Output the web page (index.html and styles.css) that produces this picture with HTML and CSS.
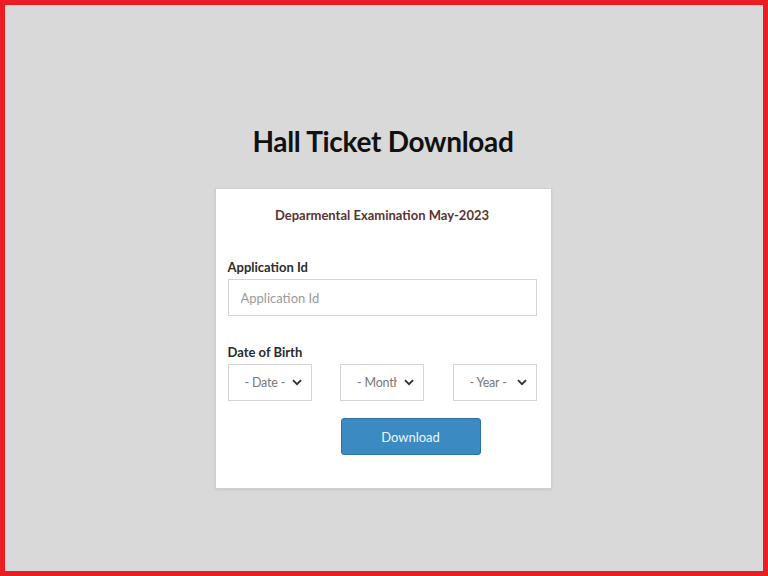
FILE: index.html
```html
<!DOCTYPE html>
<html lang="en">
<head>
<meta charset="utf-8">
<title>Hall Ticket Download</title>
<link rel="stylesheet" href="styles.css">
</head>
<body>
<div class="frame">
  <h1 class="title">Hall Ticket Download</h1>
  <form class="card">
    <h2 class="subtitle">Deparmental Examination May-2023</h2>
    <label class="label" for="appid">Application Id</label>
    <input class="input" id="appid" type="text" placeholder="Application Id">
    <label class="label label-dob">Date of Birth</label>
    <div class="dob">
      <div class="sel-wrap">
        <select class="sel"><option>- Date -</option></select>
        <svg class="chev" viewBox="0 0 10 7" width="10" height="7"><path d="M1 1.2 L5 5.2 L9 1.2" fill="none" stroke="#333" stroke-width="1.9"/></svg>
      </div>
      <div class="sel-wrap">
        <select class="sel"><option>- Month -</option></select>
        <svg class="chev" viewBox="0 0 10 7" width="10" height="7"><path d="M1 1.2 L5 5.2 L9 1.2" fill="none" stroke="#333" stroke-width="1.9"/></svg>
      </div>
      <div class="sel-wrap">
        <select class="sel"><option>- Year -</option></select>
        <svg class="chev" viewBox="0 0 10 7" width="10" height="7"><path d="M1 1.2 L5 5.2 L9 1.2" fill="none" stroke="#333" stroke-width="1.9"/></svg>
      </div>
    </div>
    <button class="btn" type="button">Download</button>
  </form>
</div>
</body>
</html>
```

FILE: styles.css
```css
html, body {
  margin: 0;
  padding: 0;
}
body {
  font-family: "Lato", "Open Sans", sans-serif;
}
.frame {
  box-sizing: border-box;
  width: 768px;
  height: 576px;
  border: 5px solid #ec1c24;
  background: #d9d9d9;
  display: flex;
  flex-direction: column;
  align-items: center;
  padding-top: 119px;
}
.title {
  margin: 0 2px 0 0;
  font-size: 28px;
  line-height: 34px;
  font-weight: 700;
  color: #111;
  letter-spacing: -0.3px;
}
.card {
  box-sizing: border-box;
  width: 337px;
  margin: 30px 2px 0 0;
  background: #fff;
  border: 1px solid #cfcfcf;
  box-shadow: 0 1px 2px rgba(0,0,0,0.08);
  padding: 17px 14px 33px 12px;
  display: flex;
  flex-direction: column;
}
.subtitle {
  margin: 0;
  text-align: center;
  font-size: 13px;
  line-height: 19px;
  font-weight: 700;
  color: #5b3333;
}
.label {
  margin-top: 33px;
  font-size: 13px;
  line-height: 18px;
  font-weight: 700;
  color: #2b2b2b;
}
.label-dob {
  margin-top: 27px;
}
.input {
  box-sizing: border-box;
  margin-top: 3px;
  width: 309px;
  height: 37px;
  border: 1px solid #d4d4d4;
  padding: 0 12px;
  font-family: inherit;
  font-size: 13px;
  color: #333;
  outline: none;
}
.input::placeholder {
  color: #9a9a9a;
}
.dob {
  margin-top: 3px;
  width: 309px;
  display: flex;
  justify-content: space-between;
}
.sel-wrap {
  position: relative;
  width: 84px;
  height: 37px;
}
.sel {
  appearance: none;
  -webkit-appearance: none;
  box-sizing: border-box;
  width: 84px;
  height: 37px;
  border: 1px solid #d4d4d4;
  border-radius: 0;
  background: #fff;
  padding: 0 26px 0 16px;
  font-family: inherit;
  font-size: 12.5px;
  letter-spacing: -0.2px;
  color: #777;
  outline: none;
}
.chev {
  position: absolute;
  right: 10px;
  top: 15px;
  pointer-events: none;
}
.btn {
  box-sizing: border-box;
  margin-top: 17px;
  margin-left: 113px;
  width: 140px;
  height: 37px;
  background: #3b8bc2;
  border: 1px solid #2f72a0;
  border-radius: 3px;
  color: #eef4fa;
  font-family: inherit;
  font-size: 13px;
  cursor: pointer;
}
```
